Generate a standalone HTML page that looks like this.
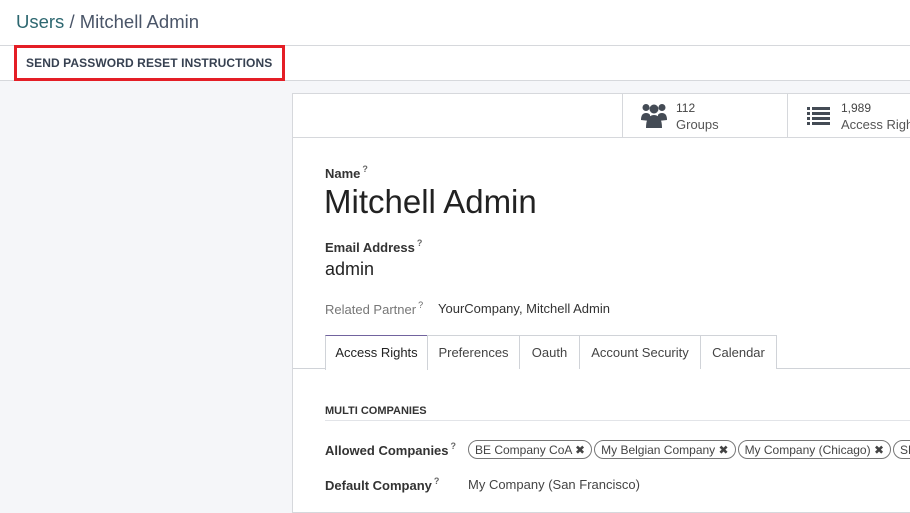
<!DOCTYPE html>
<html><head><meta charset="utf-8"><style>
*{margin:0;padding:0;box-sizing:border-box}
body{width:910px;height:506px;overflow:hidden;font-family:"Liberation Sans",sans-serif;color:#374151;background:#f5f6f9;position:relative}
.a{position:absolute;white-space:nowrap}
sup{font-size:9px;color:#666;vertical-align:6px;margin-left:2px}
.tag{display:inline-block;border:1px solid #777;border-radius:10px;padding:1px 6px;font-size:12px;color:#444;margin-right:2px;height:19px;line-height:16px}
.tab{position:absolute;top:335px;height:34px;border:1px solid #d0d3d8;border-bottom:none;font-size:13px;color:#444;text-align:center;line-height:34px;background:#fff}
</style></head><body>
<div class="a" style="left:0;top:0;width:910px;height:81px;background:#fff"></div>
<div class="a" style="left:16px;top:11px;font-size:18.5px;color:#4a5568"><span style="color:#2d6770">Users</span> / Mitchell Admin</div>
<div class="a" style="left:0;top:45px;width:910px;height:1px;background:#d6d8dc"></div>
<div class="a" style="left:0;top:80px;width:910px;height:1px;background:#d6d8dc"></div>
<div class="a" style="left:14px;top:45px;width:271px;height:36px;border:3px solid #e41e26;background:#fff"></div>
<div class="a" style="left:26px;top:56px;font-size:12px;font-weight:bold;color:#374151;letter-spacing:0.1px">SEND PASSWORD RESET INSTRUCTIONS</div>
<div class="a" style="left:292px;top:93px;width:630px;height:420px;background:#fff;border:1px solid #d6d8dc"></div>
<div class="a" style="left:293px;top:137px;width:617px;height:1px;background:#d6d8dc"></div>
<div class="a" style="left:622px;top:94px;width:1px;height:43px;background:#d6d8dc"></div>
<div class="a" style="left:787px;top:94px;width:1px;height:43px;background:#d6d8dc"></div>
<svg class="a" style="left:641px;top:103px" width="26" height="25" viewBox="0 0 26 25" fill="#444b55">
<circle cx="5" cy="4.5" r="3.5"/><circle cx="21" cy="4.5" r="3.5"/><circle cx="13" cy="6" r="4.5"/>
<path d="M0 17q0-7 5-7q3 0 4 2l0 6z"/><path d="M26 17q0-7-5-7q-3 0-4 2l0 6z"/>
<path d="M5 25q0-13 8-13q8 0 8 13z"/></svg>
<div class="a" style="left:676px;top:101px;font-size:12px;color:#444">112</div>
<div class="a" style="left:676px;top:117px;font-size:13px;color:#555">Groups</div>
<svg class="a" style="left:807px;top:107px" width="23" height="18" viewBox="0 0 23 18" fill="#444b55">
<rect x="0" y="0" width="3" height="3"/><rect x="5" y="0" width="18" height="3"/>
<rect x="0" y="5" width="3" height="3"/><rect x="5" y="5" width="18" height="3"/>
<rect x="0" y="10" width="3" height="3"/><rect x="5" y="10" width="18" height="3"/>
<rect x="0" y="15" width="3" height="3"/><rect x="5" y="15" width="18" height="3"/></svg>
<div class="a" style="left:841px;top:101px;font-size:12px;color:#444">1,989</div>
<div class="a" style="left:841px;top:117px;font-size:13px;color:#555">Access Rights</div>
<div class="a" style="left:325px;top:164px;font-size:13px;font-weight:bold;color:#333">Name<sup>?</sup></div>
<div class="a" style="left:324px;top:183px;font-size:33px;color:#222">Mitchell Admin</div>
<div class="a" style="left:325px;top:238px;font-size:13px;font-weight:bold;color:#333">Email Address<sup>?</sup></div>
<div class="a" style="left:325px;top:259px;font-size:18px;color:#222">admin</div>
<div class="a" style="left:325px;top:300px;font-size:13px;color:#777">Related Partner<sup>?</sup></div>
<div class="a" style="left:438px;top:301px;font-size:13px;color:#333">YourCompany, Mitchell Admin</div>
<div class="a" style="left:293px;top:368px;width:617px;height:1px;background:#d0d3d8"></div>
<div class="tab" style="left:325px;width:103px;border-top:1px solid #71639e;height:35px;color:#222">Access Rights</div>
<div class="tab" style="left:427px;width:93px">Preferences</div>
<div class="tab" style="left:519px;width:61px">Oauth</div>
<div class="tab" style="left:579px;width:122px">Account Security</div>
<div class="tab" style="left:700px;width:77px">Calendar</div>
<div class="a" style="left:325px;top:405px;font-size:11px;font-weight:bold;color:#333">MULTI COMPANIES</div>
<div class="a" style="left:325px;top:420px;width:585px;height:1px;background:#e2e4e8"></div>
<div class="a" style="left:325px;top:441px;font-size:13px;font-weight:bold;color:#333">Allowed Companies<sup>?</sup></div>
<div class="a" style="left:468px;top:440px"><span class="tag">BE Company CoA ✖</span><span class="tag">My Belgian Company ✖</span><span class="tag">My Company (Chicago) ✖</span><span class="tag">SF</span></div>
<div class="a" style="left:325px;top:476px;font-size:13px;font-weight:bold;color:#333">Default Company<sup>?</sup></div>
<div class="a" style="left:468px;top:477px;font-size:13px;color:#444">My Company (San Francisco)</div>
</body></html>
